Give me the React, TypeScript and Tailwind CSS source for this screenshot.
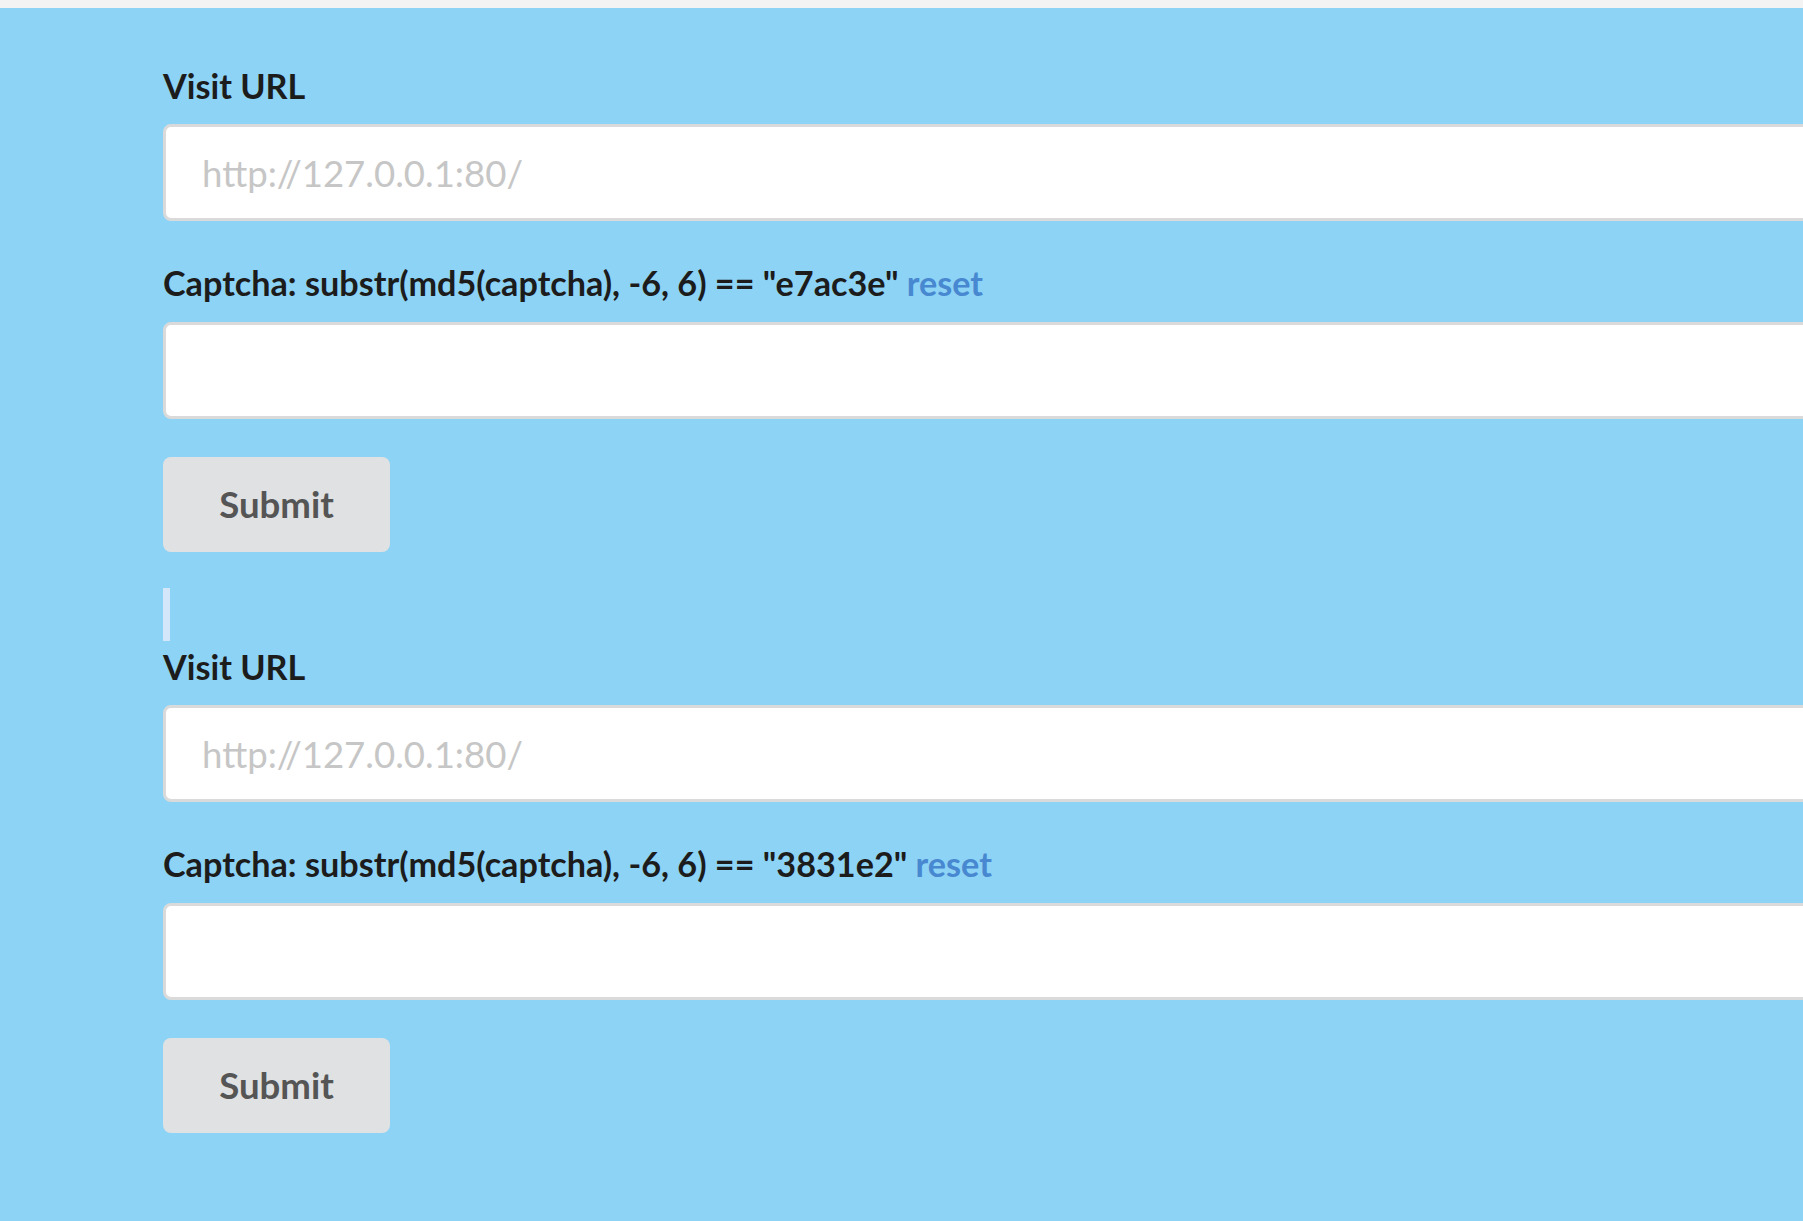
import React from "react";

function Field({ captcha }: { captcha: string }) {
  return (
    <form className="flex flex-col" onSubmit={(e) => e.preventDefault()}>
      <label className="block h-[52px] text-[34.2px] font-bold leading-[52px] text-[#1c1c1c]">
        Visit URL
      </label>
      <input
        type="text"
        placeholder="http://127.0.0.1:80/"
        className="mt-3 h-[97px] w-[1700px] rounded-[8px] border-[3px] border-[#dadada] bg-white px-[36px] text-[36.6px] text-[#363636] outline-none placeholder:text-[#c6c6c6]"
      />
      <label className="mt-[36px] block h-[52px] text-[34.2px] font-bold leading-[52px] text-[#1c1c1c]">
        Captcha: substr(md5(captcha), -6, 6) == "{captcha}"{" "}
        <a href="#" className="text-[#4788d0]">
          reset
        </a>
      </label>
      <input
        type="text"
        className="mt-[13px] h-[97px] w-[1700px] rounded-[8px] border-[3px] border-[#dadada] bg-white px-[36px] text-[36.6px] text-[#363636] outline-none"
      />
      <div className="mt-[38px]">
        <button
          type="submit"
          className="h-[95px] w-[227px] rounded-[8px] bg-[#e0e1e3] text-[36.6px] font-bold text-[#555555]"
        >
          Submit
        </button>
      </div>
    </form>
  );
}

export default function App() {
  return (
    <div
      className="h-[1221px] w-full overflow-hidden bg-[#8dd3f6]"
      style={{ fontFamily: "Lato, 'Open Sans', sans-serif" }}
    >
      <div className="h-2 bg-[#f3f3f3]" />
      <div className="pl-[163px] pt-[52px]">
        <Field captcha="e7ac3e" />
        <div className="mt-[36px] h-[53px] w-[7px] bg-[#d4e6fa]" />
        <Field captcha="3831e2" />
      </div>
    </div>
  );
}
